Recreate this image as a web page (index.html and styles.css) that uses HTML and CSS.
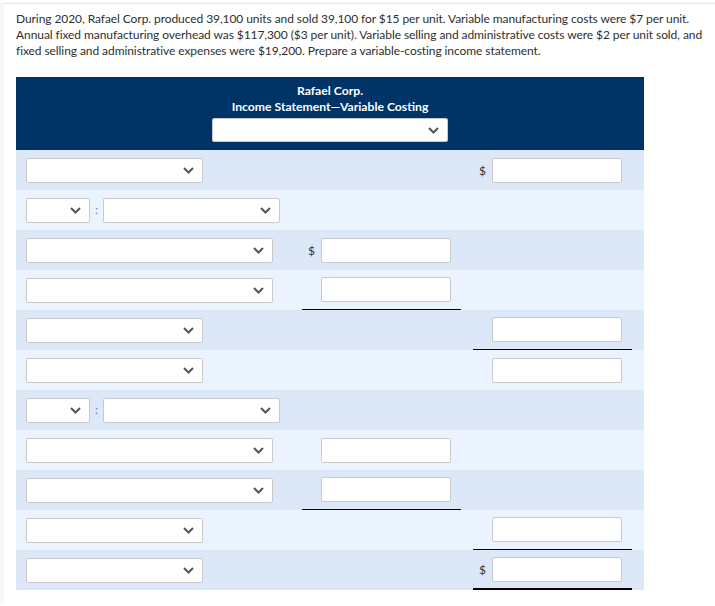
FILE: index.html
```html
<!DOCTYPE html>
<html>
<head>
<meta charset="utf-8">
<link rel="stylesheet" href="styles.css">
</head>
<body>
<div class="page">
  <div class="content">
    <p class="question">During 2020, Rafael Corp. produced 39,100 units and sold 39,100 for $15 per unit. Variable manufacturing costs were $7 per unit. Annual fixed manufacturing overhead was $117,300 ($3 per unit). Variable selling and administrative costs were $2 per unit sold, and fixed selling and administrative expenses were $19,200. Prepare a variable-costing income statement.</p>

    <div class="statement">
      <div class="head">
        <div class="title">Rafael Corp.</div>
        <div class="title">Income Statement—Variable Costing</div>
        <div class="sel sel-head"><svg class="chev" width="11" height="7" viewBox="0 0 11 7"><path d="M1 1 L5.5 5.5 L10 1" fill="none" stroke="#555" stroke-width="2"/></svg></div>
      </div>

      <div class="row dark">
        <div class="lab"><div class="sel sel-s"><svg class="chev" width="11" height="7" viewBox="0 0 11 7"><path d="M1 1 L5.5 5.5 L10 1" fill="none" stroke="#555" stroke-width="2"/></svg></div></div>
        <div class="amt"></div>
        <div class="amt"><span class="cur">$</span><div class="inp"></div></div>
      </div>

      <div class="row light">
        <div class="lab"><div class="sel sel-xs"><svg class="chev" width="11" height="7" viewBox="0 0 11 7"><path d="M1 1 L5.5 5.5 L10 1" fill="none" stroke="#555" stroke-width="2"/></svg></div><span class="colon">:</span><div class="sel sel-s"><svg class="chev" width="11" height="7" viewBox="0 0 11 7"><path d="M1 1 L5.5 5.5 L10 1" fill="none" stroke="#555" stroke-width="2"/></svg></div></div>
        <div class="amt"></div>
        <div class="amt"></div>
      </div>

      <div class="row dark">
        <div class="lab"><div class="sel sel-l"><svg class="chev" width="11" height="7" viewBox="0 0 11 7"><path d="M1 1 L5.5 5.5 L10 1" fill="none" stroke="#555" stroke-width="2"/></svg></div></div>
        <div class="amt"><span class="cur">$</span><div class="inp"></div></div>
        <div class="amt"></div>
      </div>

      <div class="row light">
        <div class="lab"><div class="sel sel-l"><svg class="chev" width="11" height="7" viewBox="0 0 11 7"><path d="M1 1 L5.5 5.5 L10 1" fill="none" stroke="#555" stroke-width="2"/></svg></div></div>
        <div class="amt ul"><span class="cur"></span><div class="inp"></div></div>
        <div class="amt"></div>
      </div>

      <div class="row dark">
        <div class="lab"><div class="sel sel-s"><svg class="chev" width="11" height="7" viewBox="0 0 11 7"><path d="M1 1 L5.5 5.5 L10 1" fill="none" stroke="#555" stroke-width="2"/></svg></div></div>
        <div class="amt"></div>
        <div class="amt ul"><span class="cur"></span><div class="inp"></div></div>
      </div>

      <div class="row light">
        <div class="lab"><div class="sel sel-s"><svg class="chev" width="11" height="7" viewBox="0 0 11 7"><path d="M1 1 L5.5 5.5 L10 1" fill="none" stroke="#555" stroke-width="2"/></svg></div></div>
        <div class="amt"></div>
        <div class="amt"><span class="cur"></span><div class="inp"></div></div>
      </div>

      <div class="row dark">
        <div class="lab"><div class="sel sel-xs"><svg class="chev" width="11" height="7" viewBox="0 0 11 7"><path d="M1 1 L5.5 5.5 L10 1" fill="none" stroke="#555" stroke-width="2"/></svg></div><span class="colon">:</span><div class="sel sel-s"><svg class="chev" width="11" height="7" viewBox="0 0 11 7"><path d="M1 1 L5.5 5.5 L10 1" fill="none" stroke="#555" stroke-width="2"/></svg></div></div>
        <div class="amt"></div>
        <div class="amt"></div>
      </div>

      <div class="row light">
        <div class="lab"><div class="sel sel-l"><svg class="chev" width="11" height="7" viewBox="0 0 11 7"><path d="M1 1 L5.5 5.5 L10 1" fill="none" stroke="#555" stroke-width="2"/></svg></div></div>
        <div class="amt"><span class="cur"></span><div class="inp"></div></div>
        <div class="amt"></div>
      </div>

      <div class="row dark">
        <div class="lab"><div class="sel sel-l"><svg class="chev" width="11" height="7" viewBox="0 0 11 7"><path d="M1 1 L5.5 5.5 L10 1" fill="none" stroke="#555" stroke-width="2"/></svg></div></div>
        <div class="amt ul"><span class="cur"></span><div class="inp"></div></div>
        <div class="amt"></div>
      </div>

      <div class="row light">
        <div class="lab"><div class="sel sel-s"><svg class="chev" width="11" height="7" viewBox="0 0 11 7"><path d="M1 1 L5.5 5.5 L10 1" fill="none" stroke="#555" stroke-width="2"/></svg></div></div>
        <div class="amt"></div>
        <div class="amt ul"><span class="cur"></span><div class="inp"></div></div>
      </div>

      <div class="row dark">
        <div class="lab"><div class="sel sel-s"><svg class="chev" width="11" height="7" viewBox="0 0 11 7"><path d="M1 1 L5.5 5.5 L10 1" fill="none" stroke="#555" stroke-width="2"/></svg></div></div>
        <div class="amt"></div>
        <div class="amt dul"><span class="cur">$</span><div class="inp"></div></div>
      </div>
    </div>
  </div>
</div>
</body>
</html>
```

FILE: styles.css
```css
html, body {
  margin: 0;
  padding: 0;
  background: #ffffff;
}

body {
  font-family: Lato, "Liberation Sans", sans-serif;
  color: #2f2f2f;
}

.page {
  margin-top: 3px;
  border-top: 1px solid #e6e6e6;
  border-left: 4px solid #f7f7f7;
  min-height: 600px;
}

.content {
  padding: 7px 4px 0 12px;
}

.question {
  margin: 0;
  font-size: 12px;
  line-height: 16px;
  letter-spacing: -0.075px;
}

.statement {
  margin-top: 18px;
  width: 628px;
}

.head {
  background: #003366;
  color: #ffffff;
  text-align: center;
  padding: 6px 0 8px;
  display: flex;
  flex-direction: column;
  align-items: center;
}

.title {
  font-weight: 700;
  font-size: 12.2px;
  line-height: 16px;
}

.sel {
  box-sizing: border-box;
  height: 25px;
  background: #ffffff;
  border: 1px solid #c9c9c9;
  border-radius: 2px;
  display: flex;
  align-items: center;
  justify-content: flex-end;
  padding-right: 8px;
}

.sel-head {
  width: 236px;
  height: 24px;
  margin-top: 3px;
}

.sel-s { width: 177px; }
.sel-l { width: 247px; }
.sel-xs { width: 64px; }

.chev {
  display: block;
}

.colon {
  width: 13px;
  text-align: center;
  color: #3a8fd0;
  font-size: 12px;
  line-height: 14px;
}

.row {
  display: grid;
  grid-template-columns: 1fr 159px 159px;
  column-gap: 12px;
  padding-right: 12px;
  height: 40px;
}

.dark { background: #dce8f8; }
.light { background: #ebf3fe; }

.lab {
  display: flex;
  align-items: center;
  padding-left: 10px;
}

.amt {
  box-sizing: border-box;
  display: flex;
  align-items: center;
  height: 40px;
}

.cur {
  width: 19px;
  flex: none;
  text-align: center;
  font-size: 12px;
  color: #333;
}

.inp {
  box-sizing: border-box;
  width: 130px;
  height: 25px;
  background: #ffffff;
  border: 1px solid #c9c9c9;
  border-radius: 2px;
}

.ul {
  border-bottom: 1px solid #000;
}

.dul {
  border-bottom: 2px solid #000;
}
```
